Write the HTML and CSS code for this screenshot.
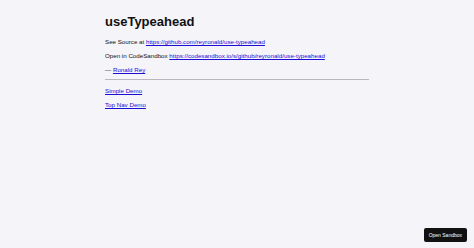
FILE: index.html
```html
<!DOCTYPE html>
<html lang="en">
<head>
  <meta charset="UTF-8" />
  <title>useTypeahead</title>
  <link rel="stylesheet" href="styles.css">
</head>
<body>
  <div class="page">
    <h1>useTypeahead</h1>
    <p>See Source at <a href="#">https://github.com/reyronald/use-typeahead</a></p>
    <p>Open in CodeSandbox <a href="#">https://codesandbox.io/s/github/reyronald/use-typeahead</a></p>
    <p class="author">— <a href="#">Ronald Rey</a></p>
    <hr />
    <p><a href="#">Simple Demo</a></p>
    <p><a href="#">Top Nav Demo</a></p>
  </div>
  <a class="sandbox" href="#">Open Sandbox</a>
</body>
</html>
```

FILE: styles.css
```css
body {
  margin: 0;
  font-family: "Liberation Sans", Arial, sans-serif;
  background: #f4f4f9;
  color: #111;
  font-size: 6.2px;
}
.page {
  width: 264px;
  margin: 0 auto;
  padding-top: 14px;
}
h1 {
  font-size: 13px;
  line-height: 15px;
  margin: 0 0 9px;
}
p {
  margin: 0 0 6px;
  line-height: 8px;
}
.author {
  margin-bottom: 5px;
}
a {
  color: #1a0dd6;
}
hr {
  border: none;
  border-top: 1px solid #b8b8be;
  margin: 0 0 7px;
}
.sandbox {
  position: fixed;
  right: 7px;
  bottom: 6px;
  background: #111;
  color: #fff;
  text-decoration: none;
  font-size: 5px;
  line-height: 6px;
  padding: 4px 5px;
  border-radius: 2px;
}
```
